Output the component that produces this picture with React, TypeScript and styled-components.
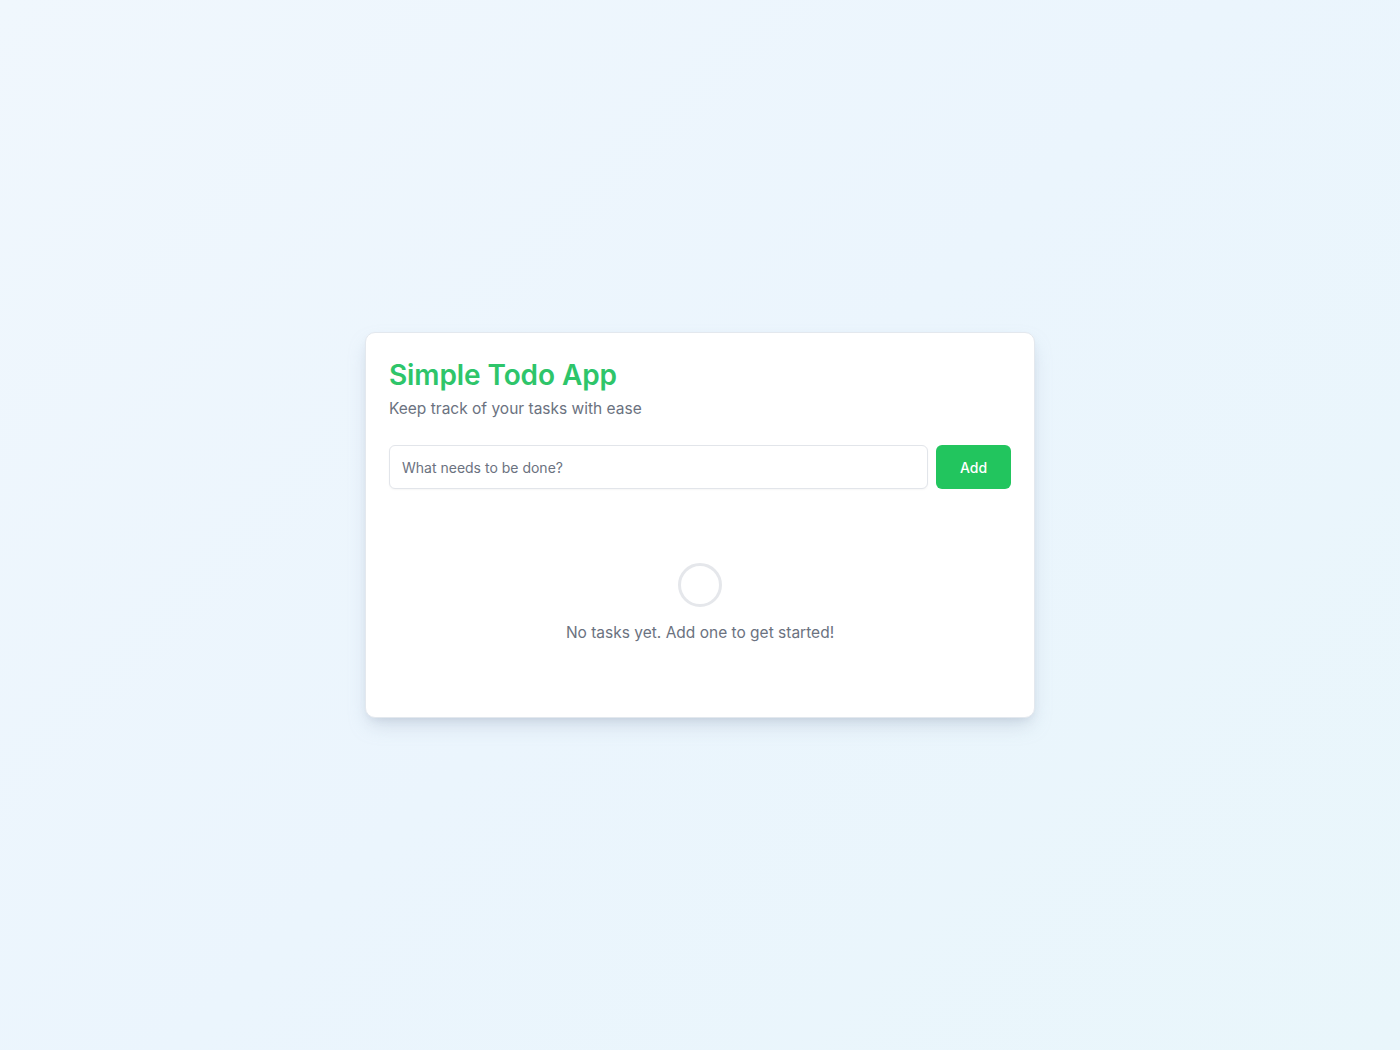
import React, { useState } from "react";
import styled, { createGlobalStyle } from "styled-components";

const Global = createGlobalStyle`
  * { box-sizing: border-box; }
  html, body { margin: 0; padding: 0; }
  body {
    font-family: "Inter", "Noto Sans", sans-serif;
    background: linear-gradient(135deg, #f0f7fd 0%, #ebf5fd 50%, #e9f6fb 100%);
    min-height: 100vh;
  }
`;

const Page = styled.main`
  min-height: 1050px;
  display: flex;
  align-items: center;
  justify-content: center;
`;

const Card = styled.section`
  width: 670px;
  background: #ffffff;
  border: 1px solid #e3e8ee;
  border-radius: 10px;
  box-shadow: 0 10px 20px -4px rgba(148, 163, 184, 0.35), 0 4px 8px -4px rgba(148, 163, 184, 0.3);
  padding: 24px 23px;
`;

const Title = styled.h1`
  margin: 0;
  font-size: 28px;
  line-height: 36px;
  font-weight: 600;
  letter-spacing: -0.1px;
  color: #2ec56a;
`;

const Subtitle = styled.p`
  margin: 4px 0 24px;
  font-size: 15.5px;
  line-height: 24px;
  color: #6b7280;
`;

const Form = styled.form`
  display: flex;
  gap: 8px;
`;

const Input = styled.input`
  flex: 1;
  height: 44px;
  padding: 0 12px;
  border: 1px solid #e2e5ea;
  border-radius: 6px;
  font-family: inherit;
  font-size: 14px;
  color: #374151;
  background: #fff;
  box-shadow: 0 1px 2px rgba(0,0,0,0.04);
  outline: none;
  &::placeholder { color: #6b7280; }
`;

const AddButton = styled.button`
  width: 75px;
  height: 44px;
  border: none;
  border-radius: 6px;
  background: #22c55e;
  color: #ffffff;
  font-family: inherit;
  font-size: 14px;
  font-weight: 500;
  cursor: pointer;
`;

const Empty = styled.div`
  margin-top: 26px;
  padding: 48px 0;
  display: flex;
  flex-direction: column;
  align-items: center;
  gap: 14px;
`;

const Ring = styled.div`
  width: 44px;
  height: 44px;
  border-radius: 50%;
  border: 3px solid #e5e7eb;
`;

const EmptyText = styled.p`
  margin: 0;
  font-size: 15.5px;
  line-height: 24px;
  color: #6b7280;
`;

export default function App() {
  const [value, setValue] = useState("");
  return (
    <>
      <Global />
      <Page>
        <Card>
          <Title>Simple Todo App</Title>
          <Subtitle>Keep track of your tasks with ease</Subtitle>
          <Form onSubmit={(e) => { e.preventDefault(); setValue(""); }}>
            <Input
              placeholder="What needs to be done?"
              value={value}
              onChange={(e) => setValue(e.target.value)}
            />
            <AddButton type="submit">Add</AddButton>
          </Form>
          <Empty>
            <Ring />
            <EmptyText>No tasks yet. Add one to get started!</EmptyText>
          </Empty>
        </Card>
      </Page>
    </>
  );
}
